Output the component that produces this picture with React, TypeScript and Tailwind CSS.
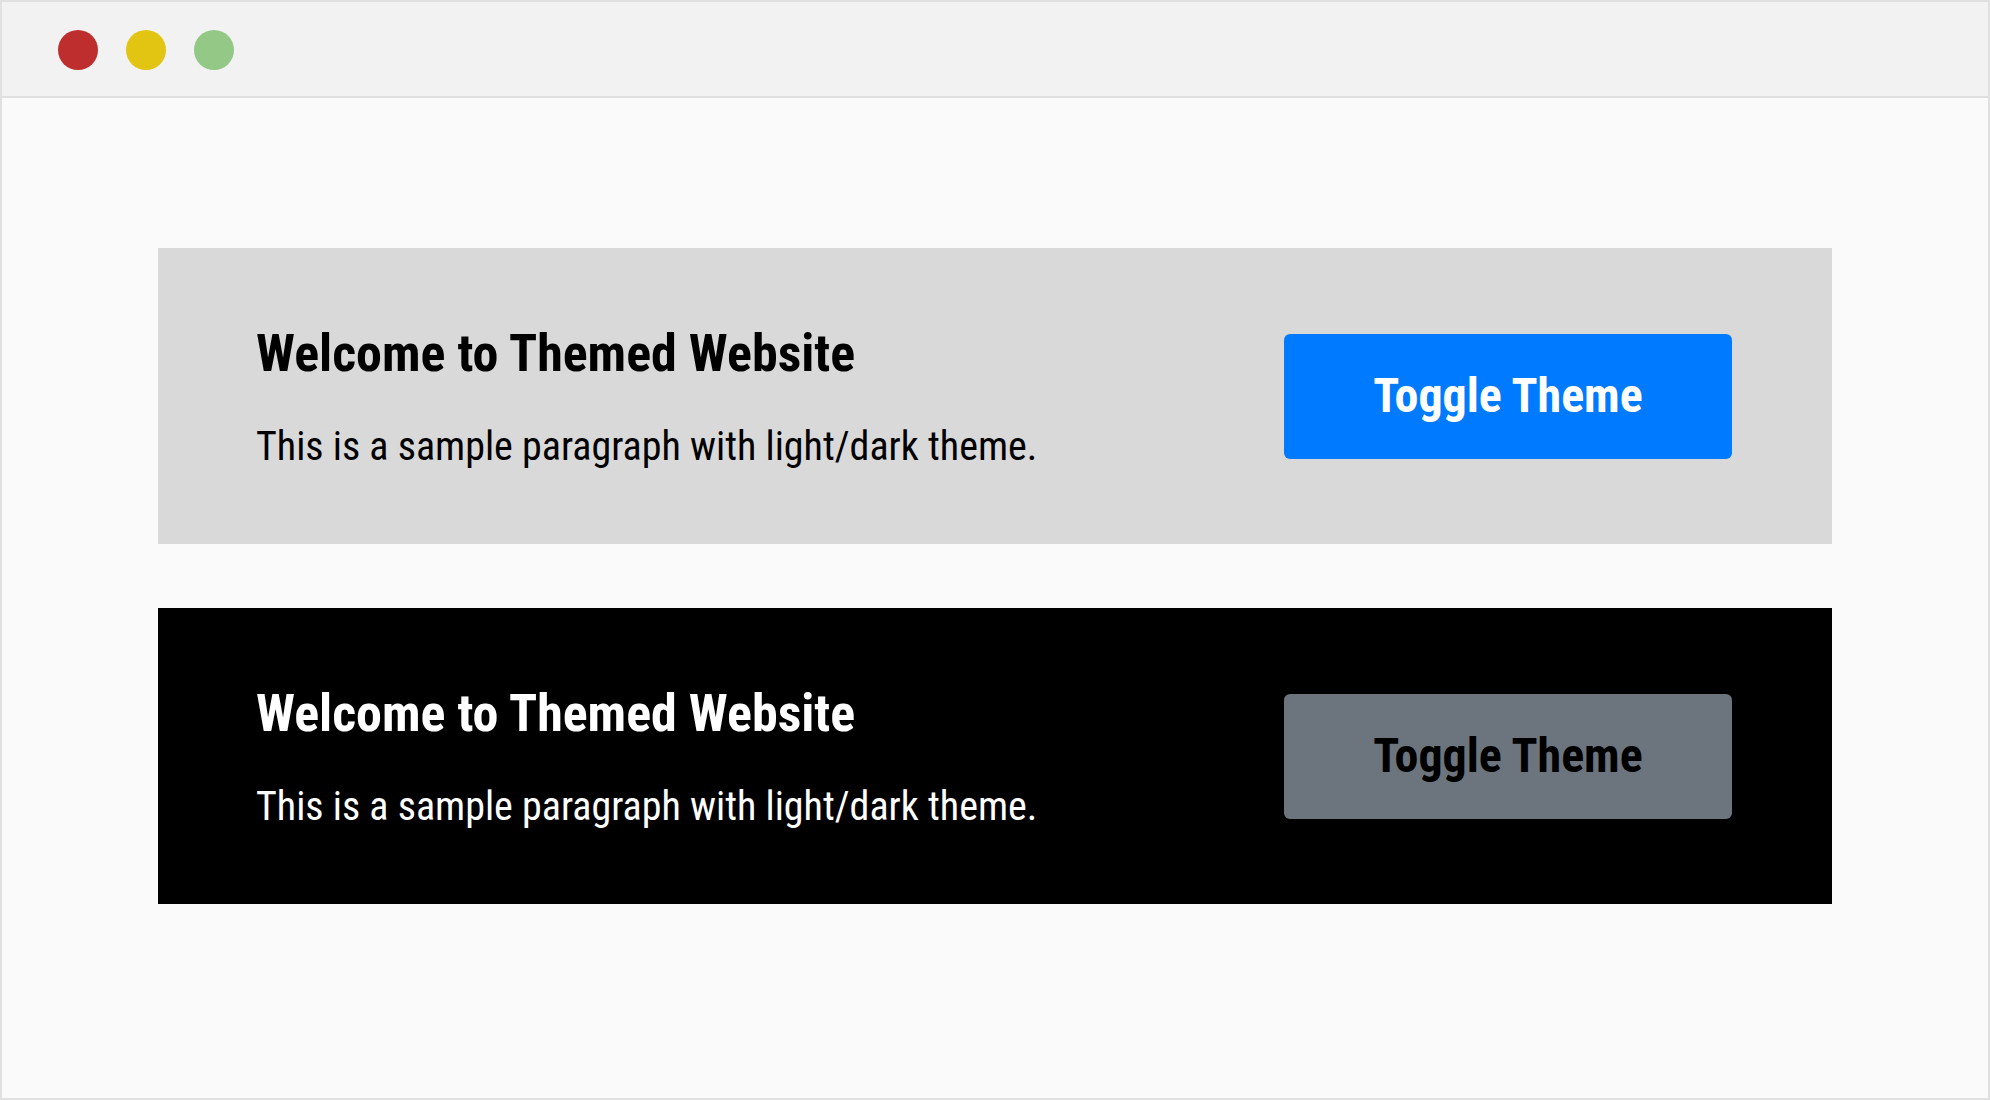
const dots = ["bg-[#bf2e2e]", "bg-[#e2c413]", "bg-[#94c887]"];

function ThemeCard({ dark }: { dark?: boolean }) {
  return (
    <section
      className={`flex h-[296px] items-center justify-between pl-[98px] pr-[100px] ${
        dark ? "bg-black text-white" : "bg-[#d9d9d9] text-black"
      }`}
    >
      <div className="flex flex-col gap-[47px] pt-[2px]">
        <h1 className="text-[52px] leading-none font-bold">Welcome to Themed Website</h1>
        <p className="text-[40px] leading-none">This is a sample paragraph with light/dark theme.</p>
      </div>
      <button
        className={`flex h-[125px] w-[448px] items-center justify-center rounded-md text-[48px] leading-none font-bold ${
          dark ? "bg-[#6c757d] text-black" : "bg-[#007bff] text-white"
        }`}
      >
        Toggle Theme
      </button>
    </section>
  );
}

export default function App() {
  return (
    <div className="flex h-[1100px] w-[1990px] flex-col border-2 border-[#e0e0e0] bg-[#fafafa] font-['Roboto',sans-serif] font-stretch-condensed">
      <header className="flex h-[96px] shrink-0 items-center gap-[28px] border-b-2 border-[#e0e0e0] bg-[#f2f2f2] pl-[56px] pt-[2px]">
        {dots.map((c) => (
          <span key={c} className={`h-10 w-10 rounded-full ${c}`} />
        ))}
      </header>
      <main className="flex flex-col gap-16 px-[156px] pt-[150px]">
        <ThemeCard />
        <ThemeCard dark />
      </main>
    </div>
  );
}
